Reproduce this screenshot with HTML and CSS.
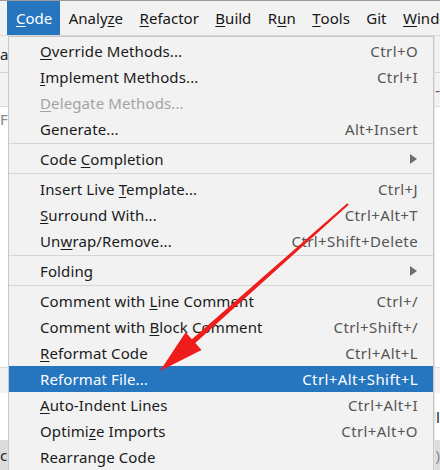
FILE: index.html
```html
<!DOCTYPE html>
<html>
<head>
<meta charset="utf-8">
<link rel="stylesheet" href="styles.css">
</head>
<body>
<div class="window">
  <div class="menubar">
    <span class="mb-item active"><u>C</u>ode</span>
    <span class="mb-item">Analy<u>z</u>e</span>
    <span class="mb-item"><u>R</u>efactor</span>
    <span class="mb-item"><u>B</u>uild</span>
    <span class="mb-item">R<u>u</u>n</span>
    <span class="mb-item"><u>T</u>ools</span>
    <span class="mb-item">Git</span>
    <span class="mb-item"><u>W</u>indow</span>
  </div>
  <div class="workspace">
    <div class="band toolbar"><span class="snip dark">a</span><span class="snip"></span></div>
    <div class="band tabs"><span class="snip"></span><span class="snip dash">-</span></div>
    <div class="band editor"><span class="snip light top">F</span><span class="snip"></span></div>
    <div class="band status"><span class="snip"></span><span class="snip"></span></div>
    <div class="band panel"><span class="snip"></span><span class="snip dark">ll</span></div>
    <div class="band bottom"><span class="snip dark">ch</span><span class="snip light">)</span></div>
  </div>

  <div class="dropdown">
    <div class="row"><span class="label"><u>O</u>verride Methods...</span><span class="key">Ctrl+O</span></div>
    <div class="row"><span class="label"><u>I</u>mplement Methods...</span><span class="key">Ctrl+I</span></div>
    <div class="row disabled"><span class="label"><u>D</u>elegate Methods...</span><span class="key"></span></div>
    <div class="row"><span class="label">Generate...</span><span class="key">Alt+Insert</span></div>
    <div class="sep"></div>
    <div class="row"><span class="label">Code <u>C</u>ompletion</span><span class="sub"></span></div>
    <div class="sep"></div>
    <div class="row"><span class="label">Insert Live <u>T</u>emplate...</span><span class="key">Ctrl+J</span></div>
    <div class="row"><span class="label"><u>S</u>urround With...</span><span class="key">Ctrl+Alt+T</span></div>
    <div class="row"><span class="label">Un<u>w</u>rap/Remove...</span><span class="key">Ctrl+Shift+Delete</span></div>
    <div class="sep"></div>
    <div class="row"><span class="label">Folding</span><span class="sub"></span></div>
    <div class="sep"></div>
    <div class="row"><span class="label">Comment with <u>L</u>ine Comment</span><span class="key">Ctrl+/</span></div>
    <div class="row"><span class="label">Comment with <u>B</u>lock Comment</span><span class="key">Ctrl+Shift+/</span></div>
    <div class="row"><span class="label"><u>R</u>eformat Code</span><span class="key">Ctrl+Alt+L</span></div>
    <div class="row selected"><span class="label">Reformat File...</span><span class="key">Ctrl+Alt+Shift+L</span></div>
    <div class="row"><span class="label"><u>A</u>uto-Indent Lines</span><span class="key">Ctrl+Alt+I</span></div>
    <div class="row"><span class="label">Optimi<u>z</u>e Imports</span><span class="key">Ctrl+Alt+O</span></div>
    <div class="row"><span class="label">Rearrange Code</span><span class="key"></span></div>
  </div>

  <svg class="arrow" width="440" height="470" viewBox="0 0 440 470">
    <polygon fill="#ee1d1b" points="348.7,204.7 195.3,343 201.5,350 160,371 185.6,332.3 191.9,339.2 347.3,203.3"/>
  </svg>
</div>
</body>
</html>
```

FILE: styles.css
```css
* { box-sizing: border-box; }

html, body {
  margin: 0;
  padding: 0;
}

body {
  width: 440px;
  height: 470px;
  overflow: hidden;
  font-family: "Noto Sans", "Liberation Sans", sans-serif;
  font-size: 15px;
  color: #1e1e1e;
  background: #f2f2f2;
}

.window {
  position: relative;
  width: 440px;
  height: 470px;
  overflow: hidden;
}

u {
  text-decoration: underline;
  text-decoration-thickness: 1px;
  text-underline-offset: 2px;
}

/* menu bar */
.menubar {
  height: 36px;
  display: flex;
  align-items: stretch;
  padding-left: 7px;
  background: #f2f2f2;
  border-top: 1px solid #9a9a9a;
  border-bottom: 1px solid #dadada;
  white-space: nowrap;
}

.mb-item {
  display: flex;
  align-items: center;
  padding: 0 8px 1px 8.5px;
  color: #161616;
}

.mb-item.active {
  background: #2675bf;
  color: #ffffff;
  padding-left: 9px;
}

/* background workspace */
.workspace {
  display: flex;
  flex-direction: column;
  height: 434px;
}

.band {
  display: flex;
  justify-content: space-between;
  align-items: center;
  font-size: 15px;
  overflow: hidden;
}

.toolbar { height: 37px; background: #f2f2f2; border-bottom: 1px solid #d4d4d4; }
.tabs    { height: 34px; background: #f2f2f2; border-bottom: 1px solid #dcdcdc; }
.editor  { height: 261px; background: #ffffff; align-items: flex-start; border-bottom: 1px solid #dadada; }
.status  { height: 25px; background: #f2f2f2; }
.panel   { height: 47px; background: #ffffff; }
.bottom  { height: 30px; background: #dcdcdc; }

.snip { display: block; }
.snip.dark { color: #222; }
.snip.light { color: #8a8a8a; }
.snip.dash { color: #555; }
.snip.top { margin-top: 2px; }

/* dropdown menu */
.dropdown {
  position: absolute;
  left: 8px;
  top: 36px;
  width: 426px;
  padding-top: 1px;
  background: #f2f2f2;
  border: 1px solid #c8c8c8;
  border-bottom: none;
  box-shadow: 1px 0 0 #e4e4e4;
}

.row {
  height: 26px;
  display: flex;
  align-items: center;
  justify-content: space-between;
  padding: 0 15px 0 31px;
  white-space: nowrap;
}

.label { color: #1a1a1a; letter-spacing: 0.12px; }
.key { color: #555555; letter-spacing: 0.4px; }

.row.disabled .label { color: #a3a3a3; }

.row.selected { background: #2675bf; }
.row.selected .label,
.row.selected .key { color: #ffffff; }

.sub {
  width: 0;
  height: 0;
  margin-right: 1px;
  border-top: 5px solid transparent;
  border-bottom: 5px solid transparent;
  border-left: 7px solid #6e6e6e;
}

.sep {
  height: 4px;
  padding-top: 1px;
}
.sep::before {
  content: "";
  display: block;
  height: 1px;
  background: #d6d6d6;
}

.arrow {
  position: absolute;
  left: 0;
  top: 0;
  pointer-events: none;
}
```
